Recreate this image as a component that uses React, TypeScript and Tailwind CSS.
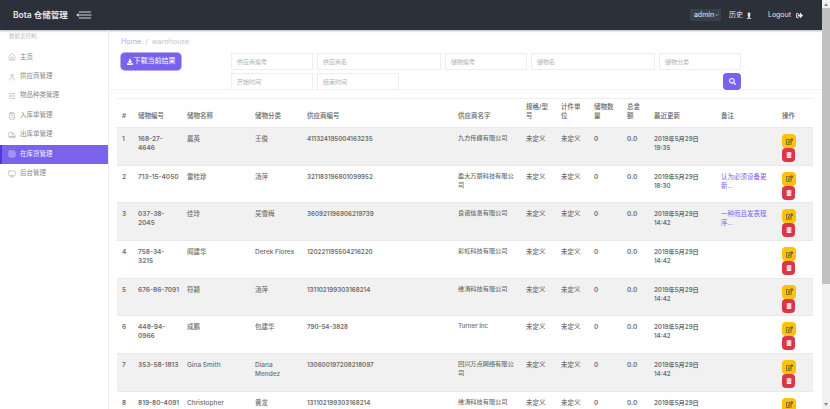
import { ChevronDown, Home, User, SlidersHorizontal, ClipboardList, Truck, Grid3x3, Monitor } from 'lucide-react';
import { FaChessPawn, FaDownload, FaRegEdit, FaSearch, FaSignOutAlt, FaTrashAlt } from 'react-icons/fa';

const font = "font-['Inter','Noto_Sans_CJK_SC',sans-serif]";

const navItems = [
  { label: '主页', icon: Home },
  { label: '供应商管理', icon: User },
  { label: '物品种类管理', icon: SlidersHorizontal },
  { label: '入库单管理', icon: ClipboardList },
  { label: '出库单管理', icon: Truck },
  { label: '在库货管理', icon: Grid3x3, active: true },
  { label: '后台管理', icon: Monitor },
];

const rows = [
  { id: '1', code: '168-27-\n4646', name: '晨英', kind: '王俊', supplier: '411324195004163235', company: '九方传媒有限公司', time: '19:35', note: '' },
  { id: '2', code: '713-15-4050', name: '雷桂珍', kind: '汤萍', supplier: '321183196801099952', company: '盈大万朋科技有限公司', time: '18:30', note: '认为必须设备更新...' },
  { id: '3', code: '037-38-\n2045', name: '佳玲', kind: '吴雪梅', supplier: '360921196906219739', company: '良诺信息有限公司', time: '14:42', note: '一种而且发表程序...' },
  { id: '4', code: '758-34-\n3215', name: '阎建华', kind: 'Derek Flores', supplier: '120221195504216220', company: '彩虹科技有限公司', time: '14:42', note: '' },
  { id: '5', code: '676-86-7091', name: '符颖', kind: '汤萍', supplier: '131102199303168214', company: '维涛科技有限公司', time: '14:42', note: '' },
  { id: '6', code: '448-94-\n0966', name: '成鹏', kind: '包建华', supplier: '790-54-3828', company: 'Turner Inc', time: '14:42', note: '' },
  { id: '7', code: '353-58-1813', name: 'Gina Smith', kind: 'Diana Mendez', supplier: '130600197208218097', company: '回兴万点网络有限公司', time: '14:42', note: '' },
  { id: '8', code: '819-80-4091', name: 'Christopher Walker', kind: '黄龙', supplier: '131102199303168214', company: '维涛科技有限公司', time: '14:42', note: '' },
];

function Field({ placeholder, width }: { placeholder: string; width: string }) {
  return (
    <div className={`h-[17px] border border-[#eceef2] px-[5px] text-[6px] leading-[15px] text-[#b0b0b0] ${width}`}>
      {placeholder}
    </div>
  );
}

export default function App() {
  return (
    <div className={`flex h-[409px] w-[830px] overflow-hidden bg-white ${font}`}>
      <div className="flex w-[822px] flex-col overflow-hidden">
        {/* Top bar */}
        <header className="flex h-[30px] shrink-0 items-center bg-[#2b303b] pl-[13px] pr-[19px] text-[7px] text-[#e8e8e8] shadow-[0_1px_2px_rgba(0,0,0,0.3)]">
          <span className="text-[8.5px] font-semibold">Bota 仓储管理</span>
          <svg viewBox="0 0 16 8" className="ml-2 h-[8px] w-[16px]" fill="none" stroke="currentColor" strokeWidth="0.9">
            <path d="M3 1h12M0.5 4h15M3 7h12" />
            <path d="M3 2.6L1 4l2 1.4" />
          </svg>
          <div className="ml-auto flex items-center">
            <span className="flex h-3 w-[31px] items-center justify-between rounded-[1px] bg-[#3a404a] pl-[4px] pr-[1px]">
              admin
              <ChevronDown className="h-[6px] w-[6px]" />
            </span>
            <span className="ml-2">历史</span>
            <FaChessPawn className="ml-[3px] h-[7px] w-[6px]" />
            <span className="ml-4">Logout</span>
            <FaSignOutAlt className="ml-[5px] h-[7px] w-[7px]" />
          </div>
        </header>

        <div className="flex min-h-0 flex-1">
          {/* Sidebar */}
          <aside className="w-[109px] shrink-0 border-r border-[#eceef2] pt-[2px]">
            <p className="pl-[9px] text-[5.5px] text-[#bdbdbd]">数据表控制</p>
            <nav className="mt-[8px] flex flex-col gap-[1px]">
              {navItems.map(({ label, icon: Icon, active }) => (
                <div
                  key={label}
                  className={`flex h-[18.4px] items-center gap-[4px] text-[6.5px] ${
                    active ? 'border-l-2 border-[#4d38e0] bg-[#7b62ee] pl-[6px] text-[#f2f0ff]' : 'pl-[8px] text-[#8a8a8a]'
                  }`}
                >
                  <Icon className="h-[8px] w-[8px]" strokeWidth={1.2} />
                  {label}
                </div>
              ))}
            </nav>
          </aside>

          <main className="min-w-0 flex-1">
            {/* Breadcrumb */}
            <div className="flex h-[23px] items-center pl-[12px] pt-[2px] text-[7.2px]">
              <span className="text-[#b4a8f2]">Home</span>
              <span className="mx-[4px] text-[#c4c4c4]">/</span>
              <span className="text-[#c4c4c4]">warehouse</span>
            </div>

            {/* Filters */}
            <div className="flex h-[37px] border-b border-[#f4f4f6] pl-[12px] pr-[8px]">
              <button className="flex h-[17px] w-[60px] items-center justify-center gap-[1px] rounded-sm bg-[#7b62ee] text-[7px] text-white shadow-[0_0_0_1px_#b9aaf6]">
                <FaDownload className="h-[6px] w-[6px]" />
                下载当前结果
              </button>
              <div className="ml-[50px] flex flex-col gap-[3px]">
                <div className="flex gap-[4px]">
                  <Field placeholder="供应商编号" width="w-[82px]" />
                  <Field placeholder="供应商名" width="w-[124px]" />
                  <Field placeholder="储物编号" width="w-[82px]" />
                  <Field placeholder="储物名" width="w-[124px]" />
                  <Field placeholder="储物分类" width="w-[82px]" />
                </div>
                <div className="flex gap-[4px]">
                  <Field placeholder="开始时间" width="w-[82px]" />
                  <Field placeholder="结束时间" width="w-[82px]" />
                  <button className="ml-auto flex h-[17px] w-[18px] items-center justify-center rounded-sm bg-[#7b62ee] text-white">
                    <FaSearch className="h-[7px] w-[7px]" />
                  </button>
                </div>
              </div>
            </div>

            {/* Table */}
            <div className="pl-[8px] pt-[8px]">
              <table className="w-[696px] table-fixed border-t border-[#eeeeee] text-left text-[6.5px] leading-[9px] text-[#6e6e6e]">
                <colgroup>
                  <col className="w-[16px]" />
                  <col className="w-[49px]" />
                  <col className="w-[68px]" />
                  <col className="w-[52px]" />
                  <col className="w-[151px]" />
                  <col className="w-[68px]" />
                  <col className="w-[35px]" />
                  <col className="w-[33px]" />
                  <col className="w-[33px]" />
                  <col className="w-[27px]" />
                  <col className="w-[67px]" />
                  <col className="w-[61px]" />
                  <col className="w-[36px]" />
                </colgroup>
                <thead>
                  <tr className="h-[29px] align-bottom">
                    {['#', '储物编号', '储物名称', '储物分类', '供应商编号', '供应商名字', '规格/型号', '计件单位', '储物数量', '总金额', '最近更新', '备注', '操作'].map((title) => (
                      <th key={title} className="px-[5px] pb-[6px] font-medium text-[#666666]">
                        {title}
                      </th>
                    ))}
                  </tr>
                </thead>
                <tbody className="font-semibold">
                  {rows.map((row, index) => (
                    <tr key={row.id} className={`h-[37.7px] border-t border-[#e9e9e9] align-top ${index % 2 === 0 ? 'bg-[#f1f1f1]' : 'bg-white'}`}>
                      <td className="px-[5px] pt-[7px]">{row.id}</td>
                      <td className="whitespace-pre px-[5px] pt-[7px]">{row.code}</td>
                      <td className="px-[5px] pt-[7px] font-medium">{row.name}</td>
                      <td className="px-[5px] pt-[7px] font-medium">{row.kind}</td>
                      <td className="px-[5px] pt-[6px] text-[6.2px]">{row.supplier}</td>
                      <td className="px-[5px] pt-[5px] text-[6.2px] font-medium">{row.company}</td>
                      <td className="px-[5px] pt-[7px] font-medium">未定义</td>
                      <td className="px-[5px] pt-[7px] font-medium">未定义</td>
                      <td className="px-[5px] pt-[7px]">0</td>
                      <td className="px-[5px] pt-[7px]">0.0</td>
                      <td className="whitespace-pre px-[5px] pt-[6px] text-[6.2px]">{`2019年5月29日\n${row.time}`}</td>
                      <td className="px-[5px] pt-[7px] font-normal text-[#7b62ee]">{row.note}</td>
                      <td className="px-[5px] pt-[6px]">
                        <div className="flex flex-col items-start">
                          <span className="flex h-[14px] w-[14px] items-center justify-center rounded-sm bg-[#ffc107] text-[#333333]">
                            <FaRegEdit className="h-[7px] w-[7px]" />
                          </span>
                          <span className="flex h-[14px] w-[13px] items-center justify-center rounded-sm bg-[#dc3545] text-white">
                            <FaTrashAlt className="h-[6px] w-[6px]" />
                          </span>
                        </div>
                      </td>
                    </tr>
                  ))}
                </tbody>
              </table>
            </div>
          </main>
        </div>
      </div>

      {/* Scrollbar */}
      <div className="flex w-[8px] flex-col items-center bg-[#f1f1f1]">
        <span className="mt-[3px] h-0 w-0 border-x-[2px] border-b-[3px] border-x-transparent border-b-[#8a8a8a]" />
        <div className="mt-[2px] h-[276px] w-full bg-[#c1c1c1]" />
        <span className="mt-auto mb-[3px] h-0 w-0 border-x-[2px] border-t-[3px] border-x-transparent border-t-[#8a8a8a]" />
      </div>
    </div>
  );
}
